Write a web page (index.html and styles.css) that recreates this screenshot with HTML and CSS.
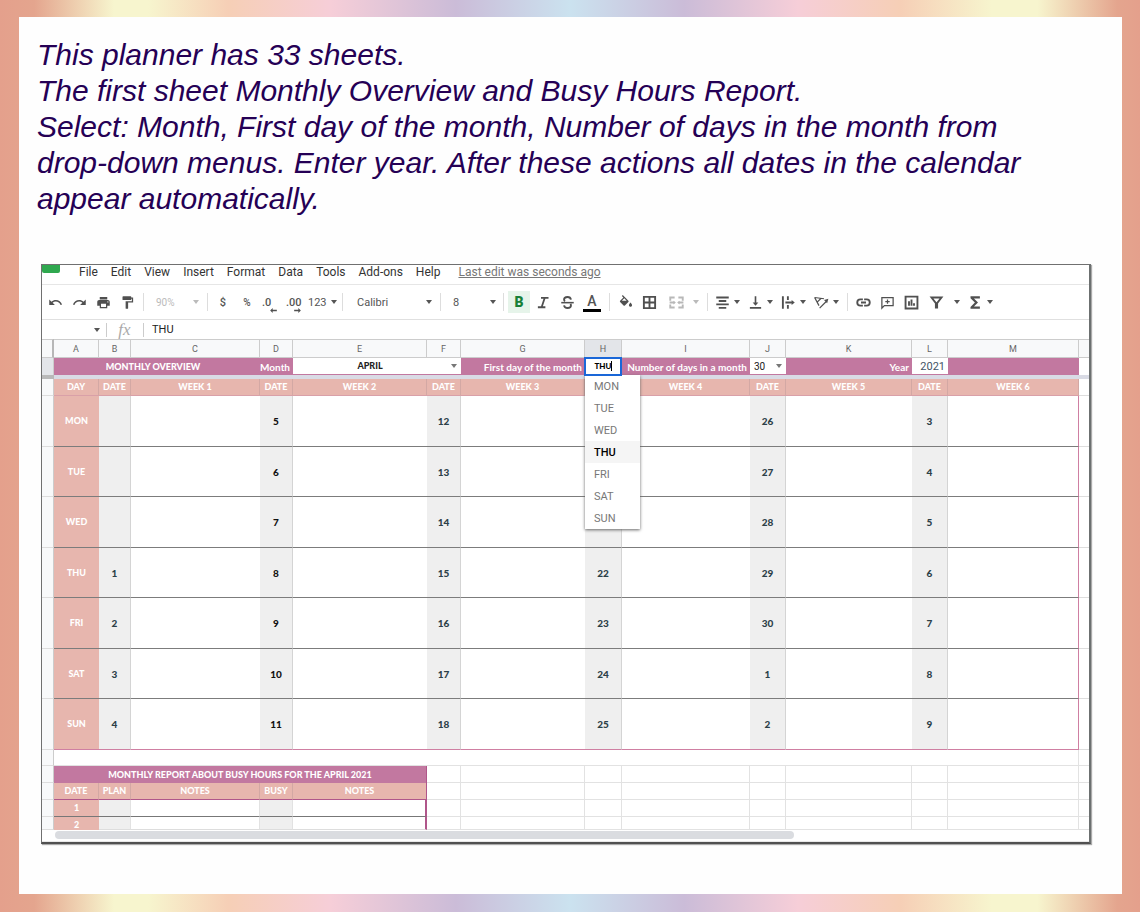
FILE: index.html
```
<!DOCTYPE html>
<html lang="en">
  <head>
    <meta charset="utf-8">
    <title>Monthly planner</title>
    <link rel="stylesheet" href="styles.css">
  </head>
  <body>
    <main class="card">
      <p class="intro">This planner has 33 sheets.<br>
        The first sheet Monthly Overview and Busy Hours Report.<br>
        Select: Month, First day of the month, Number of days in the month from<br>
        drop-down menus. Enter year. After these actions all dates in the calendar<br>
        appear automatically.</p>

      <section class="sheet">
        <nav class="menu">
          <span class="logo"></span>
          <button>File</button>
          <button>Edit</button>
          <button>View</button>
          <button>Insert</button>
          <button>Format</button>
          <button>Data</button>
          <button>Tools</button>
          <button>Add-ons</button>
          <button>Help</button>
          <a href="#history">Last edit was seconds ago</a>
        </nav>

        <div class="toolbar">
          <button aria-label="Undo"><svg viewBox="0 0 24 24"><path d="M12.500 8c-2.650 0-5.050 1-6.900 2.600L2 7v9h9l-3.600-3.600c1.400-1.200 3.200-1.900 5.100-1.900 3.500 0 6.500 2.300 7.600 5.500l2.400-.8C21.100 11 17.200 8 12.500 8z"/></svg></button>
          <button aria-label="Redo"><svg viewBox="0 0 24 24"><path d="M18.400 10.600C16.500 9 14.200 8 11.500 8 6.800 8 2.900 11 1.500 15.200l2.400.8c1-3.200 4-5.500 7.600-5.500 2 0 3.700.7 5.100 1.900L13 16h9V7l-3.600 3.600z"/></svg></button>
          <button aria-label="Print"><svg viewBox="0 0 24 24"><path d="M19 8H5c-1.700 0-3 1.300-3 3v6h4v4h12v-4h4v-6c0-1.700-1.300-3-3-3zm-3 11H8v-5h8v5zm3-7c-.6 0-1-.4-1-1s.4-1 1-1 1 .4 1 1-.4 1-1 1zm-1-9H6v4h12V3z"/></svg></button>
          <button aria-label="Paint format"><svg viewBox="0 0 24 24"><path d="M18 4V3c0-.6-.4-1-1-1H5c-.6 0-1 .4-1 1v4c0 .6.4 1 1 1h12c.6 0 1-.4 1-1V6h1v4H9v11c0 .6.4 1 1 1h2c.6 0 1-.4 1-1v-9h8V4h-3z"/></svg></button>
          <i class="sep"></i>
          <label class="drop zoom"><select aria-label="Zoom" disabled><option>90%</option></select></label>
          <i class="sep"></i>
          <button>$</button>
          <button class="small">%</button>
          <button class="decimal" aria-label="Decrease decimals">.0<svg viewBox="0 0 8 6"><path d="M8 2H3V0L0 3l3 3V4h5z"/></svg></button>
          <button class="decimal" aria-label="Increase decimals">.00<svg viewBox="0 0 8 6"><path d="M0 2h5V0l3 3-3 3V4H0z"/></svg></button>
          <label class="drop format"><select aria-label="Number format"><option>123</option></select></label>
          <i class="sep"></i>
          <label class="drop font"><select aria-label="Font"><option>Calibri</option></select></label>
          <i class="sep"></i>
          <label class="drop size"><select aria-label="Font size"><option>8</option></select></label>
          <i class="sep"></i>
          <button class="bold on">B</button>
          <button aria-label="Italic"><svg viewBox="0 0 24 24"><path d="M8 3v3h4l-4 12H3v3h12v-3h-4l4-12h5V3z"/></svg></button>
          <button aria-label="Strikethrough"><svg viewBox="0 0 24 24"><path d="M2 11h20v2.500H2z"/><path class="line" d="M17.500 7.500C17 4.500 14.500 3.200 12 3.200c-3 0-5.500 1.300-5.500 4.100 0 1.200.6 2.200 1.600 2.700M6.500 16.500c.5 3 2.900 4.200 5.500 4.200 3 0 5.500-1.200 5.500-4 0-1-.3-1.800-.8-2.500"/></svg></button>
          <button class="colour">A</button>
          <i class="sep"></i>
          <button aria-label="Fill colour"><svg viewBox="0 0 24 24"><path d="M16.600 9L7.600 0 6.200 1.400l2.400 2.400L3.400 9c-.6.600-.6 1.500 0 2.100l5.500 5.500c.6.600 1.500.6 2.100 0l5.600-5.500c.6-.6.6-1.500 0-2.100zM6.200 9L10 5.200 13.800 9H6.200zM20 12s-2.500 2.700-2.500 4.300c0 1.400 1.100 2.500 2.500 2.500s2.500-1.100 2.500-2.500C22.500 14.700 20 12 20 12z"/></svg></button>
          <button aria-label="Borders"><svg viewBox="0 0 24 24"><path class="line" d="M3 3h18v18H3zM12 3v18M3 12h18"/></svg></button>
          <button class="split merge" aria-label="Merge cells" disabled><svg viewBox="0 0 24 24"><path class="line" d="M2 9V4h7M15 4h7v5M2 15v5h7M15 20h7v-5M1 12h8M23 12h-8"/><path d="M7 9l4 3-4 3zM17 9l-4 3 4 3z"/></svg></button>
          <i class="sep"></i>
          <button class="split" aria-label="Horizontal align"><svg viewBox="0 0 24 24"><path class="line" d="M2 4h20M6 9.500h12M2 15h20M6 20.500h12"/></svg></button>
          <button class="split" aria-label="Vertical align"><svg viewBox="0 0 24 24"><path d="M16.500 12h-3.200V2h-2.600v10H7.500l4.500 5 4.500-5zM3 19v2.800h18V19z"/></svg></button>
          <button class="split" aria-label="Text wrapping"><svg viewBox="0 0 24 24"><path class="line" d="M3 2v20M11 2v6M11 16v6M7 12h11"/><path d="M17 8l5 4-5 4z"/></svg></button>
          <button class="split" aria-label="Text rotation"><svg viewBox="0 0 24 24"><path class="line thin" d="M1 4l15 2M1 4l7 13M11 5.500L5.500 11M9 21L20 10"/><path d="M16 8l7-2-2 7z"/></svg></button>
          <i class="sep"></i>
          <button aria-label="Insert link"><svg viewBox="0 0 24 24"><path class="line" d="M11 7H7a5 5 0 0 0 0 10h4M13 7h4a5 5 0 0 1 0 10h-4M8 12h8"/></svg></button>
          <button aria-label="Insert comment"><svg viewBox="0 0 24 24"><path class="line thin" d="M3 21V4h18v13H7zM12 7v7M8.500 10.500h7"/></svg></button>
          <button aria-label="Insert chart"><svg viewBox="0 0 24 24"><path class="line" d="M2.500 2.500h19v19h-19zM8 10v7M12 7v10M16 13v4"/></svg></button>
          <button class="split wide" aria-label="Filter"><svg viewBox="0 0 24 24"><path class="line" d="M4 4h16l-7 9v7h-2v-7z"/></svg></button>
          <button class="split last" aria-label="Functions"><svg viewBox="0 0 24 24"><path d="M19 2H4v3l7 7-7 7v3h15v-3.500H9.500L16 12 9.500 5.500H19z"/></svg></button>
        </div>

        <div class="formula">
          <button class="name" aria-label="Name box"></button>
          <i class="sep"></i>
          <label class="fx" for="fx">fx</label>
          <i class="sep"></i>
          <input id="fx" type="text" value="THU">
        </div>

        <table>
          <colgroup>
            <col class="c-row"><col class="c-a"><col class="c-b"><col class="c-c"><col class="c-d"><col class="c-e"><col class="c-f"><col class="c-g"><col class="c-h"><col class="c-i"><col class="c-j"><col class="c-k"><col class="c-l"><col class="c-m"><col class="c-n">
          </colgroup>
          <thead>
            <tr class="letters"><th class="corner"></th><th>A</th><th>B</th><th>C</th><th>D</th><th>E</th><th>F</th><th>G</th><th class="picked">H</th><th>I</th><th>J</th><th>K</th><th>L</th><th>M</th><th></th></tr>
            <tr class="settings">
              <th class="row picked"></th>
              <th colspan="3" class="heading">MONTHLY OVERVIEW</th>
              <th class="right"><label for="month">Month</label></th>
              <td colspan="2"><span class="drop month"><select id="month"><option>APRIL</option></select></span></td>
              <th class="right"><label for="first">First day of the month</label></th>
              <td class="editing">
                <input id="first" type="text" value="THU">
                <ul class="days">
                  <li><button>MON</button></li>
                  <li><button>TUE</button></li>
                  <li><button>WED</button></li>
                  <li><button class="on">THU</button></li>
                  <li><button>FRI</button></li>
                  <li><button>SAT</button></li>
                  <li><button>SUN</button></li>
                </ul>
              </td>
              <th class="right"><label for="count">Number of days in a month</label></th>
              <td><span class="drop count"><select id="count"><option>30</option></select></span></td>
              <th class="right"><label for="year">Year</label></th>
              <td><input id="year" type="text" value="2021"></td>
              <th></th>
              <td class="out"></td>
            </tr>
            <tr class="freeze"><td></td><td colspan="14"></td></tr>
            <tr class="weeks"><th class="row"></th><th>DAY</th><th>DATE</th><th>WEEK 1</th><th>DATE</th><th>WEEK 2</th><th>DATE</th><th>WEEK 3</th><th></th><th>WEEK 4</th><th>DATE</th><th>WEEK 5</th><th>DATE</th><th>WEEK 6</th><td class="out"></td></tr>
          </thead>
          <tbody class="calendar">
            <tr><th class="row"></th><th>MON</th><td class="date"></td><td></td><td class="date dark">5</td><td></td><td class="date">12</td><td></td><td class="date"></td><td></td><td class="date">26</td><td></td><td class="date">3</td><td class="last"></td><td class="out"></td></tr>
            <tr><th class="row"></th><th>TUE</th><td class="date"></td><td></td><td class="date dark">6</td><td></td><td class="date">13</td><td></td><td class="date"></td><td></td><td class="date">27</td><td></td><td class="date">4</td><td class="last"></td><td class="out"></td></tr>
            <tr><th class="row"></th><th>WED</th><td class="date"></td><td></td><td class="date dark">7</td><td></td><td class="date">14</td><td></td><td class="date"></td><td></td><td class="date">28</td><td></td><td class="date">5</td><td class="last"></td><td class="out"></td></tr>
            <tr><th class="row"></th><th>THU</th><td class="date">1</td><td></td><td class="date dark">8</td><td></td><td class="date">15</td><td></td><td class="date">22</td><td></td><td class="date">29</td><td></td><td class="date">6</td><td class="last"></td><td class="out"></td></tr>
            <tr><th class="row"></th><th>FRI</th><td class="date">2</td><td></td><td class="date dark">9</td><td></td><td class="date">16</td><td></td><td class="date">23</td><td></td><td class="date">30</td><td></td><td class="date">7</td><td class="last"></td><td class="out"></td></tr>
            <tr><th class="row"></th><th>SAT</th><td class="date">3</td><td></td><td class="date dark">10</td><td></td><td class="date">17</td><td></td><td class="date">24</td><td></td><td class="date">1</td><td></td><td class="date">8</td><td class="last"></td><td class="out"></td></tr>
            <tr><th class="row"></th><th>SUN</th><td class="date">4</td><td></td><td class="date dark">11</td><td></td><td class="date">18</td><td></td><td class="date">25</td><td></td><td class="date">2</td><td></td><td class="date">9</td><td class="last"></td><td class="out"></td></tr>
          </tbody>
          <tbody class="report">
            <tr class="gap"><th class="row"></th><td colspan="13"></td><td class="out"></td></tr>
            <tr class="title"><th class="row"></th><th colspan="5">MONTHLY REPORT ABOUT BUSY HOURS FOR THE APRIL 2021</th><td></td><td></td><td></td><td></td><td></td><td></td><td></td><td></td><td class="out"></td></tr>
            <tr class="names"><th class="row"></th><th>DATE</th><th>PLAN</th><th>NOTES</th><th>BUSY</th><th>NOTES</th><td></td><td></td><td></td><td></td><td></td><td></td><td></td><td></td><td class="out"></td></tr>
            <tr class="entry"><th class="row"></th><th>1</th><td class="date"></td><td class="note"></td><td class="date"></td><td class="note edge"></td><td></td><td></td><td></td><td></td><td></td><td></td><td></td><td></td><td class="out"></td></tr>
            <tr class="entry cut"><th class="row"></th><th><div>2</div></th><td class="date"></td><td class="note"></td><td class="date"></td><td class="note edge"></td><td></td><td></td><td></td><td></td><td></td><td></td><td></td><td></td><td class="out"></td></tr>
          </tbody>
        </table>
        <div class="scroll"><span></span></div>
      </section>
    </main>
  </body>
</html>
```
FILE: styles.css
```
* { box-sizing: border-box; }
body {
  margin: 0;
  min-height: 100vh;
  padding: 17px 18px 18px 19px;
  display: flex;
  background: linear-gradient(90deg, #e4a08c 0, #e4a58e 3%, #f7f5ce 10%, #f7f5ce 13%, #f6cfb6 20%, #f6ced8 29%, #cbbcd8 40%, #cbe2ef 50%, #cbbcd8 60%, #f6ced8 70%, #f6cfb6 79%, #f7f5ce 87%, #f7f5ce 91%, #e4a58e 98%, #e4a08c 100%);
}
button, input, select { font: inherit; color: inherit; margin: 0; padding: 0; border: 0; background: none; border-radius: 0; }
button { cursor: pointer; }

.card { flex: 1; min-width: 0; background: #fefefe; padding: 20px 31px 50px 22px; }
.intro {
  margin: 0 0 47px -4px;
  color: #250055;
  font: italic 30px/36px "Liberation Sans", Arial, sans-serif;
}

.sheet {
  border: 1px solid #707070;
  border-width: 1px 2px 2px 1px;
  border-right-color: #6c7070;
  border-bottom-color: #505050;
  box-shadow: 1px 1px 1px #aaa;
  background: #fff;
  color: #555;
  font: 10px "Roboto", sans-serif;
}

.menu { display: flex; gap: 13px; height: 20px; border-bottom: 1px solid #e6e6e6; font-size: 12px; line-height: 14px; color: #333; align-items: flex-start; }
.menu .logo { width: 18px; height: 8px; margin-right: 6px; background: #2fa84f; border-radius: 0 0 2px 2px; }
.menu a { color: #777; margin-left: 5px; }

.toolbar { display: flex; align-items: center; height: 35px; padding-left: 1px; border-bottom: 1px solid #e0e0e0; }
.toolbar button { width: 24px; height: 22px; flex: none; display: flex; align-items: center; justify-content: center; font-size: 11px; font-weight: 500; }
.toolbar svg { width: 15px; height: 15px; fill: #505050; }
.toolbar .line { fill: none; stroke: #505050; stroke-width: 3; }
.toolbar .thin { stroke-width: 2; }
.toolbar .small { font-size: 10px; }
.toolbar .decimal { position: relative; justify-content: flex-start; padding-left: 3px; }
.toolbar .decimal svg { position: absolute; right: 6px; bottom: 0; width: 7px; height: 5px; }
.toolbar .bold { font-size: 14px; font-weight: 900; }
.toolbar .on { background: #e6f4ea; color: #188038; width: 22px; margin: 0 1px; }
.toolbar .colour { width: 18px; height: 20px; margin: 0 4px; font-size: 14px; line-height: 16px; border-bottom: 3px solid #000; }
.toolbar .split { width: 33px; justify-content: space-between; padding: 0 4px; }
.toolbar .wide { width: 41px; padding-left: 6px; }
.toolbar .merge { width: 42px; padding: 0 4px 0 8px; opacity: .4; }
.sep { width: 1px; height: 18px; margin: 0 3px 0 4px; background: #ddd; flex: none; }

/* small down arrow */
.split::after, .drop::after, .name::after { content: ""; border: 3px solid transparent; border-top: 4px solid #555; border-bottom: 0; }
.drop { position: relative; display: block; }
.drop::after { position: absolute; right: 4px; top: 50%; margin-top: -2px; pointer-events: none; }
.drop select { appearance: none; width: 100%; height: 100%; display: block; }
.zoom { width: 56px; color: #bbb; }
.zoom select { padding-left: 9px; opacity: 1; }
.zoom::after { border-top-color: #bbb; }
.format { width: 31px; font-size: 11px; }
.format select { padding-left: 1px; }
.format::after { right: 1px; }
.font { width: 90px; font-size: 11px; }
.font select { padding-left: 11px; }
.size { width: 55px; font-size: 11px; }
.size select { padding-left: 9px; }
.size::after { right: 3px; }

.formula { display: flex; align-items: center; height: 19px; }
.formula .sep { height: 14px; background: #ccc; }
.name { width: 60px; height: 18px; display: flex; align-items: center; justify-content: flex-end; padding-right: 2px; }
.fx { width: 29px; text-align: center; color: #aaa; font: italic 17px/18px "Liberation Serif", serif; }
.formula input { flex: 1; padding-left: 5px; font-size: 11px; color: #222; }

table { width: 100%; table-layout: fixed; border-collapse: separate; border-spacing: 0; font: bold 10px/12px Lato, Calibri, sans-serif; }
td, th { padding: 0; white-space: nowrap; text-align: center; font-weight: 900; }
th { font-size: 9px; }
.c-row { width: 12px; }
.c-a { width: 45px; }
.c-b { width: 32px; }
.c-c { width: 129px; }
.c-d { width: 33px; }
.c-e { width: 134px; }
.c-f { width: 34px; }
.c-g { width: 124px; }
.c-h { width: 37px; }
.c-i { width: 128px; }
.c-j, .c-l { width: 36px; }
.c-k { width: 126px; }
.c-m { width: 131px; }
.c-n { width: 10px; }

.letters th { height: 19px; border: solid #ccc; border-width: 1px 1px 1px 0; background: #f8f9fa; color: #666; font: 9px "Roboto", sans-serif; }
.letters .corner { border-right: 2px solid #b7b7b7; }
.letters .picked { background: #e3e5e9; }
.letters th:last-child { border-right: 0; }
.out { border-bottom: 1px solid #ddd; }

.settings th { height: 17px; background: #c278a0; color: #fff; }
.settings td { border-bottom: 1px solid #c278a0; color: #222; }
.settings .row { background: #e3e5e9; border-right: 1px solid #ccc; }
.settings .out { border-color: #fff; }
.settings .heading { padding-right: 8px; }
.settings .right { text-align: right; padding-right: 3px; font-size: 10px; font-weight: 700; }
.settings .drop { height: 16px; }
.month select { text-align: center; text-align-last: center; padding-right: 14px; font-size: 9px; }
.month::after, .count::after { border-top-color: #777; }
.count select { padding-left: 4px; font: 10px "Roboto", sans-serif; }
#year { display: block; width: 100%; height: 16px; padding-right: 3px; text-align: right; font: 11px "Roboto", sans-serif; color: #456; }
.settings .editing { position: relative; }
#first { position: absolute; top: -1px; left: -1px; width: calc(100% + 1px); height: 19px; padding-bottom: 2px; border: 2px solid #1a67d8; background: #fff; text-align: center; font-size: 8px; color: #000; outline: 0; z-index: 3; }
/* text caret */
.editing::after { content: ""; position: absolute; z-index: 4; left: 26px; top: 3px; width: 1px; height: 10px; background: #000; }

.days { position: absolute; z-index: 2; top: 17px; left: 0; width: 55px; margin: 0; padding: 0; list-style: none; background: #fff; box-shadow: 0 1px 3px #666; }
.days button { display: block; width: 100%; height: 22px; padding-left: 9px; text-align: left; font: 11px "Roboto", sans-serif; color: #777; }
.days .on { background: #f5f5f5; color: #000; font-weight: 500; }

.freeze td { height: 4px; background: #d9dbe5; }
.freeze td:first-child { background: #b9b9b9; }

.weeks th { height: 17px; background: #e7b6ae; color: #fff; border-right: 1px solid #d3a8a4; border-bottom: 1px solid #d9a0a8; }

.calendar tr { height: 51px; }
.calendar tr:nth-child(even) { height: 50px; }
.calendar td, .calendar th { border-bottom: 1px solid #7c7c7c; }
.calendar th { background: #e7b6ae; color: #fff; }
.calendar .date { border-right: 1px solid #d4d4d4; color: #2c4048; }
.calendar .dark { color: #111; }
.calendar .last { border-right: 1px solid #cf7fa2; }
.calendar tr:last-child td, .calendar tr:last-child th { border-bottom-color: #cf7fa2; }
.calendar .out, .calendar tr:last-child .out { border-bottom-color: #ddd; }
.date { background: #efefef; }

.report tr { height: 17px; }
.report .gap { height: 16px; }
.report td { border: solid #e2e2e2; border-width: 0 1px 1px 0; }
.report .out { border-right: 0; }
.report th { background: #e7b6ae; color: #fff; }
.report .title th { background: #c278a0; border-right: 1px solid #b0568a; }
.names th { border-right: 1px solid #d3a8a4; border-bottom: 1px solid #b0568a; }
.names th:nth-child(6) { border-right-color: #b0568a; }
.entry th { border-bottom: 1px solid #777; }
.report .entry .date, .report .entry .note { border-bottom-color: #777; }
.report .entry .edge { border-right: 2px solid #b0568a; }
.report .cut { height: 13px; }
.cut div { height: 12px; overflow: hidden; line-height: 15px; }
.report .cut .date, .report .cut .note { border-bottom-color: #ddd; }
.report .cut th { border-bottom-color: #e7b6ae; }

/* row numbers strip */
.weeks .row, .calendar .row, .report .row, .report .title .row { background: #f8f9fa; border-right: 1px solid #ccc; border-bottom: 1px solid #ddd; }
.calendar tr:last-child .row, .report .cut .row { border-bottom-color: #ddd; }

.scroll { height: 12px; padding: 1px 0 2px 13px; border-bottom: 1px solid #e8e8e8; }
.scroll span { display: block; width: 71.5%; height: 8px; border-radius: 4px; background: #dadce0; }
```
